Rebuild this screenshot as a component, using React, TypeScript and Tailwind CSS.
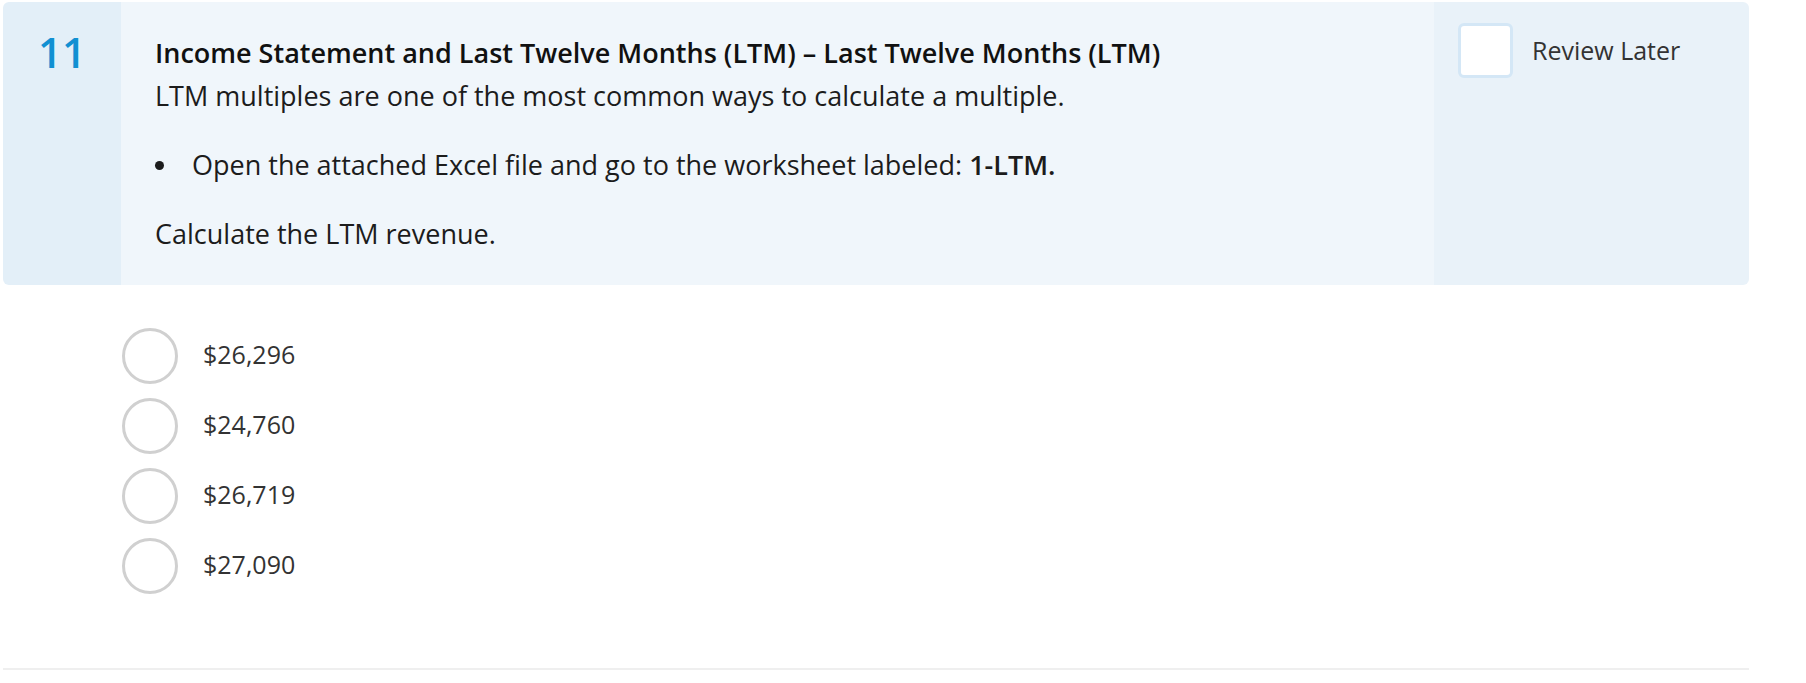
const options = ["$26,296", "$24,760", "$26,719", "$27,090"];

export default function App() {
  return (
    <div className="min-h-screen bg-white pt-[2px] pl-[3px] font-['Open_Sans',sans-serif]">
      <div className="w-[1746px] border-b-2 border-[#efefef]">
        <div className="flex overflow-hidden rounded-md">
          <div className="w-[118px] shrink-0 bg-[#e3eff8] pl-[35px] pt-[22px]">
            <div className="text-[42px] font-semibold leading-[56px] text-[#1190d2]">11</div>
          </div>
          <div className="flex-1 bg-[#f0f6fb] pl-[34px] pt-[32px] pb-[32px] text-[27px] leading-[38px] text-[#1c1c1c]">
            <div className="font-semibold text-[#111]">
              Income Statement and Last Twelve Months (LTM) – Last Twelve Months (LTM)
            </div>
            <p className="mt-[5px]">LTM multiples are one of the most common ways to calculate a multiple.</p>
            <div className="mt-[31px] flex items-center">
              <span className="mr-[28px] h-[9px] w-[9px] rounded-full bg-[#1c1c1c]" />
              <span>
                Open the attached Excel file and go to the worksheet labeled: <b className="font-semibold">1-LTM.</b>
              </span>
            </div>
            <p className="mt-[31px]">Calculate the LTM revenue.</p>
          </div>
          <div className="w-[315px] shrink-0 bg-[#e9f2f9] pl-[24px] pt-[21px]">
            <label className="flex items-start gap-[19px]">
              <span className="h-[55px] w-[55px] rounded-md border-[3px] border-[#d4e7f6] bg-white" />
              <span className="mt-[8px] text-[25px] leading-[38px] text-[#333]">Review Later</span>
            </label>
          </div>
        </div>
        <div className="flex flex-col gap-[14px] pl-[119px] pt-[43px] pb-[74px]">
          {options.map((o) => (
            <div key={o} className="flex items-center gap-[25px]">
              <span className="h-[56px] w-[56px] rounded-full border-[3px] border-[#d0d0d0] bg-white" />
              <span className="pb-[4px] text-[25px] leading-[38px] text-[#333]">{o}</span>
            </div>
          ))}
        </div>
      </div>
    </div>
  );
}
